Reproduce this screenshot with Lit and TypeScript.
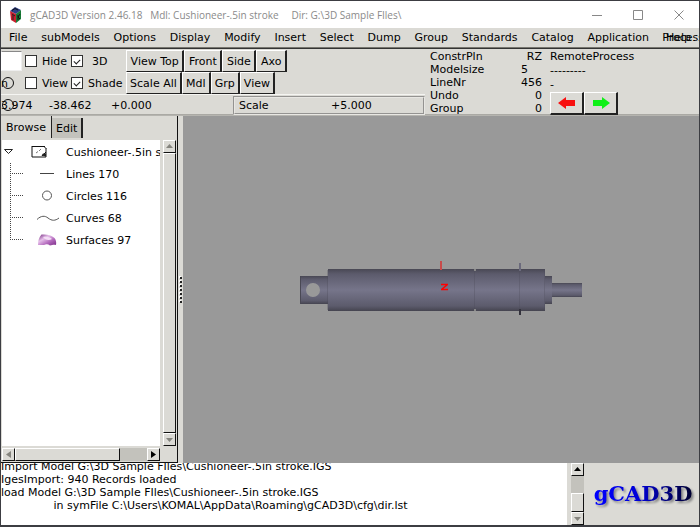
import { LitElement, html, svg, css } from "lit";
import { customElement, property, state } from "lit/decorators.js";
import { classMap } from "lit/directives/class-map.js";

const MENUS = [
  "File", "subModels", "Options", "Display", "Modify", "Insert", "Select",
  "Dump", "Group", "Standards", "Catalog", "Application",
];

const STATUS = [
  ["ConstrPln", "RZ"],
  ["Modelsize", "5"],
  ["LineNr", "456"],
  ["Undo", "0"],
  ["Group", "0"],
];

const ICONS = {
  model: svg`<path d="M8 4.500h13M22 6v9h-14v-11M19 4.500h1l2 2M22 10l-4 4" fill="none" stroke="#111" stroke-width="1"/><path d="M17.500 13.500l1.500-2h3v3z" fill="#222"/><path d="M12 11l2-1.500M15 9l2-2" stroke="#777" fill="none"/>`,
  line: svg`<path d="M16 9.500h14" stroke="#444" fill="none"/>`,
  circle: svg`<circle cx="23" cy="9.500" r="4.500" stroke="#555" fill="none"/>`,
  curve: svg`<path d="M13 11.500c4-4 8-4 11-1.500c4 3 7 3 11 0" stroke="#555" fill="none"/>`,
  surface: svg`<defs><linearGradient id="sf" x1="0" y1="0" x2="1" y2="1"><stop offset="0" stop-color="#6d2377"/><stop offset=".35" stop-color="#e6bfea"/><stop offset=".65" stop-color="#b36abd"/><stop offset="1" stop-color="#7b2b86"/></linearGradient></defs><path d="M14 15c0-4 1-8 3.500-10.500c5-.5 10 .5 13 3.500c1.500 2 2 4 1.500 7c-3-.5-4 .5-6 .5c-2-1.500-4-1.500-6-.5z" fill="url(#sf)"/><path d="M19 7c4-.5 7 0 9 2c-3 2-7 1-9-2z" fill="#f3def5"/>`,
};

@customElement("scroll-bar")
class ScrollBar extends LitElement {
  @property({ type: Boolean, reflect: true }) horizontal = false;
  @property() start = "off";
  @property() end = "off";

  static styles = css`
    :host { display: flex; flex-direction: column; width: 13px; background: #c3c2bc; }
    :host([horizontal]) { flex-direction: row; width: auto; height: 13px; }
    .arrow {
      flex: none; width: 13px; height: 13px; padding: 0; margin: 0;
      background: #dbdad5; border: 1px solid; border-color: #fff #111 #111 #fff;
      display: grid; place-items: center;
    }
    .before, .after { display: block; }
    .before { flex: var(--before, 0) 1 0; }
    .after { flex: var(--after, 0) 1 0; }
    .thumb {
      flex: var(--thumb, 1) 1 0; background: #dbdad5;
      border: 1px solid; border-color: #fff #111 #111 #fff; box-sizing: border-box;
    }
    .glyph { width: 7px; height: 7px; fill: #000; }
    .dim { fill: #85847e; }
  `;

  arrow(label: string, d: string, tone: string) {
    return html`<button class="arrow" aria-label=${label}>
      <svg class=${classMap({ glyph: true, dim: tone === "off" })} viewBox="0 0 7 7"><path d=${d} /></svg>
    </button>`;
  }

  render() {
    const h = this.horizontal;
    return html`
      ${this.arrow("Back", h ? "M6 0v7L1 3.500z" : "M0 5h7L3.500 1z", this.start)}
      <span class="before"></span><span class="thumb"></span><span class="after"></span>
      ${this.arrow("Forward", h ? "M1 0v7l5-3.500z" : "M0 2h7L3.500 6z", this.end)}
    `;
  }
}

@customElement("model-tree")
class ModelTree extends LitElement {
  static styles = css`
    :host { display: block; overflow: hidden; }
    .tree, .leaves { list-style: none; margin: 0; padding: 0; }
    .tree { padding-top: 1px; }
    .row { display: flex; align-items: center; height: 22px; white-space: nowrap; }
    .icon { flex: none; width: 40px; height: 20px; margin-right: 2px; }
    .mark { flex: none; width: 22px; height: 22px; }
    .stem { fill: none; stroke: #444; stroke-dasharray: 1 1; }
    .open { fill: #fff; stroke: #222; }
  `;

  leaves = [
    { icon: ICONS.line, text: "Lines 170" },
    { icon: ICONS.circle, text: "Circles 116" },
    { icon: ICONS.curve, text: "Curves 68" },
    { icon: ICONS.surface, text: "Surfaces 97" },
  ];

  render() {
    const last = this.leaves.length - 1;
    return html`
      <ul class="tree">
        <li>
          <div class="row">
            <svg class="mark" viewBox="0 0 22 22"><path class="open" d="M2.500 8.500h8L6.500 12.500z" /></svg>
            <svg class="icon" viewBox="0 0 40 20">${ICONS.model}</svg>
            <span>Cushioneer-.5in stroke</span>
          </div>
          <ul class="leaves">
            ${this.leaves.map((leaf, i) => html`
              <li class="row">
                <svg class="mark" viewBox="0 0 22 22">
                  <path class="stem" d=${i === last ? "M8.500 0V11M8 10.500H22" : "M8.500 0V22M8 10.500H22"} />
                </svg>
                <svg class="icon" viewBox="0 0 40 20">${leaf.icon}</svg>
                <span>${leaf.text}</span>
              </li>`)}
          </ul>
        </li>
      </ul>`;
  }
}

@customElement("model-view")
class ModelView extends LitElement {
  static styles = css`
    :host { display: block; background: #999; overflow: hidden; }
    .scene { display: block; width: 100%; height: 100%; }
  `;

  render() {
    return html`
      <svg class="scene" viewBox="183 116 516 347" role="img" aria-label="Cylinder model">
        <defs>
          <linearGradient id="metal" x1="0" y1="0" x2="0" y2="1">
            <stop offset="0" stop-color="#494854" />
            <stop offset=".12" stop-color="#5c5b6c" />
            <stop offset=".5" stop-color="#76758a" />
            <stop offset=".88" stop-color="#5c5b6c" />
            <stop offset="1" stop-color="#454450" />
          </linearGradient>
        </defs>
        <path d="M300 276H328V304H300zM320 290a7 7 0 1 0-14 0a7 7 0 1 0 14 0z" fill="url(#metal)" fill-rule="evenodd" />
        <rect x="300" y="276" width="1" height="28" fill="#494854" />
        <rect x="328" y="269" width="217" height="42" fill="url(#metal)" />
        <rect x="545" y="276" width="7" height="28" fill="url(#metal)" />
        <rect x="552" y="283" width="30" height="14" fill="url(#metal)" />
        <path d="M327.500 270v40M544.500 271v38M474.500 271v38M519.500 271v38" stroke="#4c4b59" opacity=".3" />
        <path d="M474 269h2v2h-2zM474 309h2v2h-2z" fill="#888" />
        <rect x="519" y="263" width="2" height="8" fill="#6b6a7c" />
        <rect x="519" y="309" width="2" height="6" fill="#33323c" />
        <rect x="440" y="261" width="2" height="9" fill="#c84a4a" />
        <path d="M441 284.500h7M447 285l-5 4M441 289.500h7" stroke="#f00" stroke-width="1.600" fill="none" />
      </svg>`;
  }
}

@customElement("app-root")
class AppRoot extends LitElement {
  @state() tab = "Browse";

  static styles = css`
    :host {
      display: grid;
      grid-template-rows: 27px 20px auto minmax(0, 1fr) 62px;
      height: 100vh; box-sizing: border-box;
      border: solid #3c3d42; border-width: 1px 1px 2px 1px;
      background: #dbdad5; color: #000;
      font: 11px/13px "DejaVu Sans", Verdana, sans-serif;
      overflow: hidden;
    }
    button, input { font: inherit; color: inherit; }
    .title { display: flex; align-items: center; background: #fff; color: #8a8a8a; font: 10px/16px "Open Sans", "Segoe UI", sans-serif; white-space: pre; }
    .app-icon { width: 13px; height: 16px; margin: 0 8px; }
    .name { flex: 1; font: inherit; margin: 0; }
    .caption { width: 41px; height: 26px; padding: 0; border: 0; background: none; display: grid; place-items: center; }
    .caption svg { width: 10px; height: 10px; fill: none; stroke: #888; }

    .menus { display: flex; align-items: center; border-bottom: 1px solid #77766f; position: relative; overflow: hidden; }
    .menu-list { flex: 1; display: flex; justify-content: space-between; padding: 0 50px 0 8px; }
    .menu { border: 0; padding: 0; background: none; line-height: 20px; }
    .over { position: absolute; right: -5px; top: 0; }
    .help { right: 8px; }

    .tools { display: grid; grid-template-columns: 424px 115px 1fr; border-top: 1px solid #333; border-bottom: 1px solid #aaa9a4; height: 67px; box-sizing: border-box; }
    .left { display: flex; flex-direction: column; min-width: 0; padding-top: 1px; }
    .row { display: flex; align-items: center; height: 22px; }
    .lead { flex: none; width: 24px; display: flex; align-items: center; position: relative; }
    .entry { width: 21px; height: 20px; box-sizing: border-box; margin: 0; padding: 0; background: #fff; border: 1px solid; border-color: #888 #eee #eee #fff; }
    .round { appearance: none; flex: none; width: 12px; height: 12px; box-sizing: border-box; margin: 0; border: 1px solid #111; border-radius: 50%; position: absolute; left: 1px; top: 0; }
    .check { display: flex; align-items: center; gap: 5px; }
    .first { width: 46px; }
    .wide { width: 55px; }
    .indent { padding-left: 4px; }
    .tick { appearance: none; flex: none; width: 12px; height: 12px; box-sizing: border-box; margin: 0; background: #fff; border: 1px solid #333; display: grid; place-items: center; }
    .tick:checked::before { content: ""; width: 5px; height: 3px; border: solid #222; border-width: 0 0 1px 1px; transform: rotate(-45deg); }
    .views { display: flex; width: 161px; }
    .zooms { display: flex; width: 149px; }
    .btn { flex: 1 1 auto; height: 22px; box-sizing: border-box; padding: 0 2px; background: #dbdad5; border: 1px solid; border-color: #fff #222 #222 #fff; border-right-width: 2px; white-space: nowrap; }
    .coords { flex: 1; display: flex; align-items: center; border-top: 1px solid #f5f5f2; }
    .x { width: 48px; position: relative; display: flex; }
    .y { width: 62px; }
    .z { flex: 1; }
    .scale { display: flex; width: 192px; height: 19px; box-sizing: border-box; align-items: center; padding-left: 4px; border: 2px groove #e8e7e3; }
    .scale span { width: 92px; }

    .status { margin: 1px 0 0 5px; border-collapse: collapse; width: 112px; line-height: 13px; }
    .status th { font-weight: normal; text-align: left; padding: 0; }
    .status td { text-align: right; padding: 0; }
    .status .short { padding-right: 14px; }
    .remote { display: flex; flex-direction: column; padding: 1px 0 0 10px; }
    .remote span { height: 14px; }
    .arrows { display: flex; }
    .arrows .btn { flex: none; width: 34px; height: 23px; padding: 0; display: grid; place-items: center; border-bottom-width: 2px; }
    .arrows svg { width: 18px; height: 12px; }

    .main { display: grid; grid-template-columns: 177px 5px minmax(0, 1fr); min-height: 0; border-top: 1px solid #b5b4af; }
    .side { display: flex; flex-direction: column; min-height: 0; border-right: 1px solid #111; border-bottom: 1px solid #111; }
    .tabs { display: flex; align-items: flex-end; height: 22px; }
    .tab { height: 20px; padding: 0 4px; border: 0; border-right: 2px solid #222; background: #c3c2bc; }
    .on { height: 22px; padding: 0 5px; border-right-width: 1px; background: #dbdad5; }
    .browser { flex: 1; min-height: 0; display: grid; grid-template-columns: minmax(0, 1fr) 13px; grid-template-rows: minmax(0, 1fr) 13px; gap: 2px 3px; padding: 2px 1px 1px; }
    .tree { background: #fff; }
    .vbar { --thumb: 1; }
    .hbar { --thumb: 105; --after: 27; }
    .grip { display: flex; flex-direction: column; justify-content: center; align-items: center; gap: 2px; }
    .dot { width: 2px; height: 2px; background: #222; box-shadow: -1px -1px #fff; }

    .foot { display: grid; grid-template-columns: minmax(0, 1fr) 18px 112px; min-height: 0; }
    .log { margin: 0; background: #fff; overflow: hidden; display: flex; flex-direction: column; justify-content: flex-end; padding-bottom: 13px; border-right: 2px solid #dbdad5; white-space: pre; }
    .logbar { margin-left: 2px; --before: 18; --thumb: 18; }
    .brand { display: grid; place-items: center; }
    .logo {
      font: bold 21px/26px "DejaVu Serif", serif; color: transparent;
      background: linear-gradient(90deg, #00f, #0000d8 45%, #000030); background-clip: text; -webkit-background-clip: text;
      filter: drop-shadow(2px 2px 1px #888);
    }
  `;

  check(label: string, on: boolean, cls: string, indent = false) {
    return html`<label class="check ${cls}"><input class="tick" type="checkbox" .checked=${on} /><span class=${classMap({ indent })}>${label}</span></label>`;
  }

  buttons(labels: string[]) {
    return labels.map((l) => html`<button class="btn">${l}</button>`);
  }

  render() {
    return html`
      <header class="title">
        <svg class="app-icon" viewBox="0 0 13 16">
          <path d="M1 4l5-4 6 3-5 4z" fill="#2d3f86" /><path d="M1 4l6 3v9l-5-3z" fill="#c8202e" /><path d="M7 7l5-4v9l-5 4z" fill="#177a35" />
          <path d="M3 3.500l3-2 3 1.500M9 8v5M11 7L9 10l2 2" stroke="#111" fill="none" /><path d="M3 7l3 2M4 8v5" stroke="#222" fill="none" />
        </svg>
        <h1 class="name">gCAD3D Version 2.46.18   Mdl: Cushioneer-.5in stroke     Dir: G:\\3D Sample FIles\\</h1>
        <button class="caption" aria-label="Minimize"><svg viewBox="0 0 10 10"><path d="M0 5.500h10" /></svg></button>
        <button class="caption" aria-label="Maximize"><svg viewBox="0 0 10 10"><path d="M.5.5h9v9h-9z" /></svg></button>
        <button class="caption" aria-label="Close"><svg viewBox="0 0 10 10"><path d="M.5.5l9 9M9.500.5l-9 9" /></svg></button>
      </header>

      <nav class="menus">
        <div class="menu-list">${MENUS.map((m) => html`<button class="menu">${m}</button>`)}</div>
        <button class="menu over">Process</button>
        <button class="menu over help">Help</button>
      </nav>

      <section class="tools">
        <div class="left">
          <div class="row">
            <div class="lead"><input class="entry" aria-label="Entry" /></div>
            ${this.check("Hide", false, "first")}${this.check("3D", true, "wide", true)}
            <div class="views">${this.buttons(["View Top", "Front", "Side", "Axo"])}</div>
          </div>
          <div class="row">
            <div class="lead"><input class="round" type="radio" name="mode" aria-label="On" /><span>n</span></div>
            ${this.check("View", false, "first")}${this.check("Shade", true, "wide")}
            <div class="zooms">${this.buttons(["Scale All", "Mdl", "Grp", "View"])}</div>
          </div>
          <div class="coords">
            <span class="x"><input class="round" type="radio" name="mode" aria-label="Off" /><span>3.974</span></span>
            <span class="y">-38.462</span><span class="z">+0.000</span>
            <div class="scale"><span>Scale</span>+5.000</div>
          </div>
        </div>
        <table class="status">
          ${STATUS.map(([k, v]) => html`<tr><th scope="row">${k}</th><td class=${classMap({ short: v === "5" })}>${v}</td></tr>`)}
        </table>
        <div class="remote">
          <span>RemoteProcess</span><span>---------</span><span>-</span>
          <div class="arrows">
            <button class="btn" aria-label="Undo"><svg viewBox="0 0 18 12"><path d="M0 6l8-6v3h9v6H8v3z" fill="#f81010" /></svg></button>
            <button class="btn" aria-label="Redo"><svg viewBox="0 0 18 12"><path d="M18 6l-8-6v3H1v6h9v3z" fill="#10f018" /></svg></button>
          </div>
        </div>
      </section>

      <main class="main">
        <aside class="side">
          <div class="tabs">
            ${["Browse", "Edit"].map((t) => html`<button class=${classMap({ tab: true, on: this.tab === t })} @click=${() => (this.tab = t)}>${t}</button>`)}
          </div>
          <div class="browser">
            <model-tree class="tree"></model-tree>
            <scroll-bar class="vbar"></scroll-bar>
            <scroll-bar class="hbar" horizontal end="on"></scroll-bar>
          </div>
        </aside>
        <div class="grip">${Array.from({ length: 7 }, () => html`<span class="dot"></span>`)}</div>
        <model-view></model-view>
      </main>

      <footer class="foot">
        <div class="log"><div>Import Model G:\\3D Sample FIles\\Cushioneer-.5in stroke.IGS</div><div>IgesImport: 940 Records loaded</div><div>load Model G:\\3D Sample FIles\\Cushioneer-.5in stroke.IGS</div><div>               in symFile C:\\Users\\KOMAL\\AppData\\Roaming\\gCAD3D\\cfg\\dir.lst</div></div>
        <scroll-bar class="logbar" start="on"></scroll-bar>
        <div class="brand"><span class="logo">gCAD3D</span></div>
      </footer>
    `;
  }
}
